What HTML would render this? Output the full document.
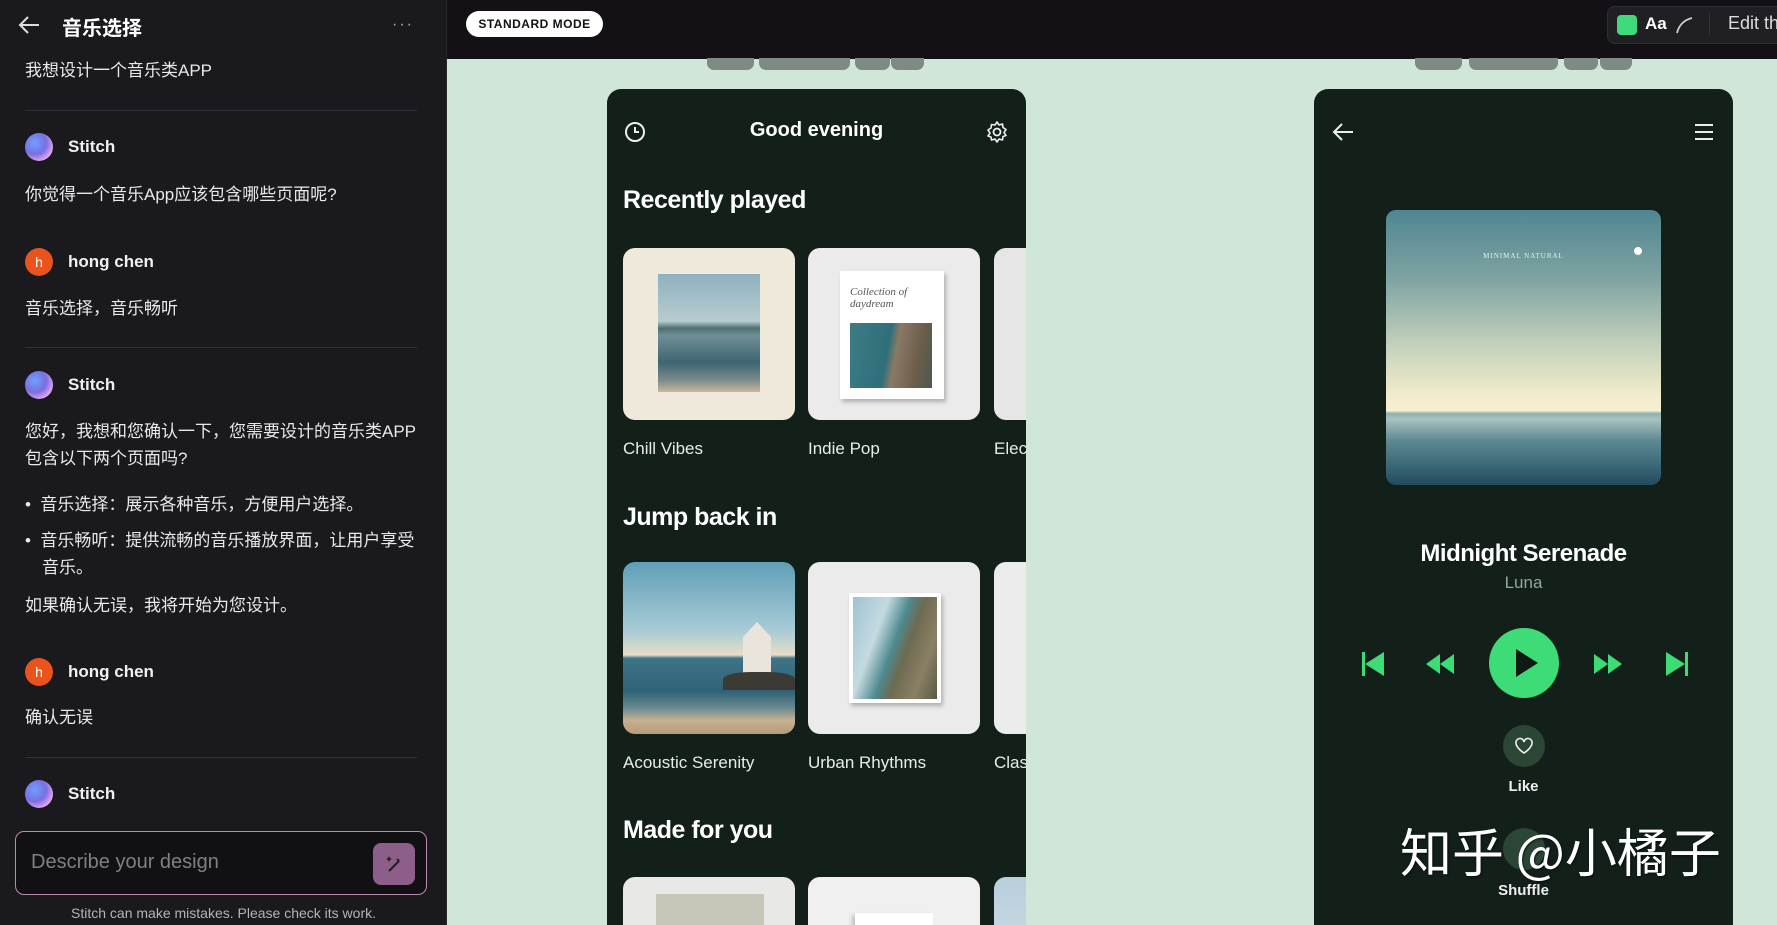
<!DOCTYPE html>
<html><head><meta charset="utf-8"><style>
*{margin:0;padding:0;box-sizing:border-box}
html,body{width:1777px;height:925px;overflow:hidden}
body{background:#cfe6d9;font-family:"Liberation Sans","Noto Sans CJK SC",sans-serif;position:relative}
.a{position:absolute}
#top{left:0;top:0;width:1777px;height:59px;background:#141116}
#side{left:0;top:0;width:447px;height:925px;background:#1a1a1e;border-right:1px solid #2a2a2e}
.t{color:#e9e9ec;font-size:17px;white-space:nowrap;font-family:"Liberation Sans","Noto Sans CJK SC",sans-serif}
.n{color:#f0f0f0;font-size:17px;font-weight:bold}
.av{width:28px;height:28px;border-radius:50%}
.st{background:radial-gradient(circle at 35% 35%,#6fa0ff,#7a6ee0 45%,#e6a6f0 75%,#f6d4f6)}
.hc{background:#e8541c;color:#fff;font-size:14px;text-align:center;line-height:28px}
.div{left:25px;width:392px;height:1px;background:#303036}
.phone{background:#13201a;border-radius:14px;overflow:hidden}
.h2{color:#fff;font-weight:bold;font-size:25px;letter-spacing:-0.5px}
.lab{color:#e8ece9;font-size:17px}
.card{width:172px;height:172px;border-radius:12px;overflow:hidden}
.tab{background:#7f8a84;border-radius:0 0 7px 7px;height:12px;top:58px}
</style></head><body>
<div id="top" class="a"></div>
<div id="side" class="a"></div>

<svg class="a" style="left:17px;top:14px" width="24" height="22" viewBox="0 0 24 22"><path d="M22 11H3M11 3L3 11l8 8" stroke="#ddd" stroke-width="2" fill="none"/></svg>
<div class="a" style="left:62px;top:12px;color:#fff;font-size:20px;font-weight:bold">音乐选择</div>
<div class="a" style="left:392px;top:16px;color:#aaa;font-size:16px;letter-spacing:2px">···</div>
<div class="a t" style="left:25px;top:56px">我想设计一个音乐类APP</div>
<div class="a div" style="top:110px"></div>
<div class="a av st" style="left:25px;top:133px"></div>
<div class="a n" style="left:68px;top:137px">Stitch</div>
<div class="a t" style="left:25px;top:180px">你觉得一个音乐App应该包含哪些页面呢?</div>
<div class="a av hc" style="left:25px;top:248px">h</div>
<div class="a n" style="left:68px;top:252px">hong chen</div>
<div class="a t" style="left:25px;top:294px">音乐选择，音乐畅听</div>
<div class="a div" style="top:347px"></div>
<div class="a av st" style="left:25px;top:371px"></div>
<div class="a n" style="left:68px;top:375px">Stitch</div>
<div class="a t" style="left:25px;top:417px">您好，我想和您确认一下，您需要设计的音乐类APP</div>
<div class="a t" style="left:25px;top:444px">包含以下两个页面吗?</div>
<div class="a t" style="left:25px;top:490px">•&nbsp; 音乐选择：展示各种音乐，方便用户选择。</div>
<div class="a t" style="left:25px;top:526px">•&nbsp; 音乐畅听：提供流畅的音乐播放界面，让用户享受</div>
<div class="a t" style="left:42px;top:553px">音乐。</div>
<div class="a t" style="left:25px;top:591px">如果确认无误，我将开始为您设计。</div>
<div class="a av hc" style="left:25px;top:658px">h</div>
<div class="a n" style="left:68px;top:662px">hong chen</div>
<div class="a t" style="left:25px;top:703px">确认无误</div>
<div class="a div" style="top:757px"></div>
<div class="a av st" style="left:25px;top:780px"></div>
<div class="a n" style="left:68px;top:784px">Stitch</div>
<div class="a" style="left:15px;top:831px;width:412px;height:64px;border:1.5px solid #b98bb3;border-radius:9px;background:#111013"></div>
<div class="a" style="left:31px;top:851px;color:#808080;font-size:20px">Describe your design</div>
<div class="a" style="left:373px;top:843px;width:42px;height:42px;border-radius:8px;background:#8d5e89"></div>
<svg class="a" style="left:382px;top:852px" width="24" height="24" viewBox="0 0 24 24"><path d="M7 19L17 9M15 7l2 2" stroke="#222" stroke-width="2.2" fill="none"/><path d="M7 4l1 2 2 1-2 1-1 2-1-2-2-1 2-1z" fill="#222"/></svg>
<div class="a" style="left:0;width:447px;top:905px;text-align:center;color:#b4b4b8;font-size:14px">Stitch can make mistakes. Please check its work.</div>

<div class="a" style="left:466px;top:11px;width:137px;height:26px;border-radius:13px;background:#fff;color:#111;font-size:12px;font-weight:bold;text-align:center;line-height:26px;letter-spacing:0.5px">STANDARD MODE</div>
<div class="a" style="left:1607px;top:6px;width:180px;height:38px;border-radius:8px;background:#1f1f24;border:1px solid #2e2e34"></div>
<div class="a" style="left:1617px;top:15px;width:20px;height:20px;border-radius:4px;background:#3fd87a"></div>
<div class="a" style="left:1645px;top:14px;color:#fff;font-weight:bold;font-size:17px">Aa</div>
<svg class="a" style="left:1674px;top:15px" width="20" height="20" viewBox="0 0 20 20"><path d="M3 18Q6 6 18 3" stroke="#ccc" stroke-width="1.8" fill="none"/></svg>
<div class="a" style="left:1709px;top:12px;width:1px;height:24px;background:#333"></div>
<div class="a" style="left:1728px;top:13px;color:#ddd;font-size:18px;white-space:nowrap">Edit th</div>

<div class="a tab" style="left:707px;width:47px"></div><div class="a tab" style="left:759px;width:91px"></div><div class="a tab" style="left:855px;width:35px"></div><div class="a tab" style="left:891px;width:33px"></div>
<div class="a tab" style="left:1415px;width:47px"></div><div class="a tab" style="left:1469px;width:89px"></div><div class="a tab" style="left:1564px;width:34px"></div><div class="a tab" style="left:1600px;width:32px"></div>

<div class="a phone" style="left:607px;top:89px;width:419px;height:836px;border-radius:14px 14px 0 0">
 <svg class="a" style="left:17px;top:32px" width="22" height="22" viewBox="0 0 22 22"><circle cx="11" cy="11" r="9" stroke="#eee" stroke-width="2" fill="none"/><path d="M11 6v5h4" stroke="#eee" stroke-width="2" fill="none"/></svg>
 <div class="a" style="left:0;width:419px;top:30px;text-align:center;color:#fff;font-weight:bold;font-size:20px">Good evening</div>
 <svg class="a" style="left:378px;top:31px" width="24" height="24" viewBox="0 0 24 24"><circle cx="12" cy="12" r="3.5" stroke="#eee" stroke-width="1.8" fill="none"/><path d="M12 2l2 3 3.5-1 .5 3.5 3 2-2 3 2 3-3 1-.5 3.5-3.5-1-2 3-2-3-3.5 1L6 17l-3-1 2-3-2-3 3-2 .5-3.5L10 5z" stroke="#eee" stroke-width="1.6" fill="none" stroke-linejoin="round"/></svg>
 <div class="a h2" style="left:16px;top:97px">Recently played</div>
 <div class="a card" style="left:16px;top:159px;background:#efe9dc"><div class="a" style="left:35px;top:26px;width:102px;height:118px;background:linear-gradient(#8fb1be 0,#b7cccf 40%,#4f6f70 46%,#6f8f96 52%,#3e6572 75%,#7a8c8c 90%,#c9b89c 100%)"></div></div>
 <div class="a card" style="left:201px;top:159px;background:#ebebeb"><div class="a" style="left:32px;top:23px;width:104px;height:128px;background:#fff;box-shadow:2px 3px 4px rgba(0,0,0,.25)"><div class="a" style="left:10px;top:15px;color:#555;font-family:'Liberation Serif',serif;font-style:italic;font-size:11px">Collection of daydream</div><div class="a" style="left:10px;top:52px;width:82px;height:65px;background:linear-gradient(100deg,#3e7c84 0,#2e6f7a 45%,#8a7a64 55%,#6c5d4b 80%,#4a5950 100%)"></div></div></div>
 <div class="a card" style="left:387px;top:159px;background:#e6e6e6"></div>
 <div class="a lab" style="left:16px;top:350px">Chill Vibes</div>
 <div class="a lab" style="left:201px;top:350px">Indie Pop</div>
 <div class="a lab" style="left:387px;top:350px">Electronic</div>
 <div class="a h2" style="left:16px;top:414px">Jump back in</div>
 <div class="a card" style="left:16px;top:473px;background:linear-gradient(#5f9fb7 0,#a8cbd6 40%,#e8ddc8 54%,#3f7488 56%,#2f6276 75%,#6a8a90 85%,#c8b090 92%,#b79c7a 100%)"><div class="a" style="left:120px;top:60px;width:28px;height:60px;background:#e9e5dc;clip-path:polygon(50% 0,100% 25%,100% 100%,0 100%,0 25%)"></div><div class="a" style="left:100px;top:110px;width:72px;height:18px;background:#3b3a34;border-radius:40% 40% 0 0"></div></div>
 <div class="a card" style="left:201px;top:473px;background:#ebebeb"><div class="a" style="left:41px;top:31px;width:92px;height:110px;background:#fff;box-shadow:2px 3px 4px rgba(0,0,0,.25)"><div class="a" style="left:4px;top:4px;width:84px;height:102px;background:linear-gradient(110deg,#9fc3d3 0,#c4dae0 30%,#4e8a8f 48%,#6d6a52 60%,#8a8064 80%,#5a5a48 100%)"></div></div></div>
 <div class="a card" style="left:387px;top:473px;background:#ececec"></div>
 <div class="a lab" style="left:16px;top:664px">Acoustic Serenity</div>
 <div class="a lab" style="left:201px;top:664px">Urban Rhythms</div>
 <div class="a lab" style="left:387px;top:664px">Classical</div>
 <div class="a h2" style="left:16px;top:727px">Made for you</div>
 <div class="a card" style="left:16px;top:788px;background:#e8e8e6"><div class="a" style="left:33px;top:17px;width:108px;height:80px;background:#c8c6b8"></div></div>
 <div class="a card" style="left:201px;top:788px;background:#f0f0f0"><div class="a" style="left:47px;top:36px;width:78px;height:60px;background:#fff;box-shadow:-3px 2px 4px rgba(0,0,0,.2)"></div></div>
 <div class="a card" style="left:387px;top:788px;background:linear-gradient(#b9cfdc,#dde6ea)"></div>
</div>

<div class="a phone" style="left:1314px;top:89px;width:419px;height:836px;border-radius:14px 14px 0 0">
 <svg class="a" style="left:17px;top:32px" width="24" height="22" viewBox="0 0 24 22"><path d="M22 11H3M11 3L3 11l8 8" stroke="#eee" stroke-width="2" fill="none"/></svg>
 <svg class="a" style="left:379px;top:33px" width="22" height="20" viewBox="0 0 22 20"><path d="M2 3h18M2 10h18M2 17h18" stroke="#eee" stroke-width="2"/></svg>
 <div class="a" style="left:72px;top:121px;width:275px;height:275px;border-radius:10px;background:linear-gradient(#4f8691 0,#7fa3a2 25%,#c5d3bd 50%,#f3eccd 68%,#f6efd2 73%,#8fb0b0 74%,#a9c2c0 76%,#5c8890 84%,#3d6c7a 92%,#224a5e 100%)">
  <div class="a" style="left:0;width:275px;top:42px;text-align:center;color:#e8eee8;font-size:7px;letter-spacing:1px;font-family:'Liberation Serif',serif">MINIMAL NATURAL</div>
  <div class="a" style="left:248px;top:37px;width:8px;height:8px;border-radius:50%;background:#fff"></div>
 </div>
 <div class="a" style="left:0;width:419px;top:451px;text-align:center;color:#fff;font-weight:bold;font-size:24px;letter-spacing:-0.5px">Midnight Serenade</div>
 <div class="a" style="left:0;width:419px;top:484px;text-align:center;color:#8fa99a;font-size:17px">Luna</div>
 <svg class="a" style="left:48px;top:560px" width="330" height="30" viewBox="0 0 330 30">
  <path d="M0 3h3v24H0zM3 15L22 3v24z" fill="#3ddc76"/>
  <path d="M64 15l14-10v20zM78 15l14-10v20z" fill="#3ddc76"/>
  <path d="M232 5l14 10-14 10zM246 5l14 10-14 10z" fill="#3ddc76"/>
  <path d="M304 3l19 12-19 12zM323 3h3v24h-3z" fill="#3ddc76"/>
 </svg>
 <div class="a" style="left:175px;top:539px;width:70px;height:70px;border-radius:50%;background:#3ddc76"></div>
 <svg class="a" style="left:198px;top:558px" width="28" height="32" viewBox="0 0 28 32"><path d="M4 2l22 14L4 30z" fill="#0e1a13"/></svg>
 <div class="a" style="left:189px;top:636px;width:42px;height:42px;border-radius:50%;background:#2c4636"></div>
 <svg class="a" style="left:200px;top:648px" width="20" height="18" viewBox="0 0 20 18"><path d="M10 16S2 11 2 6a4 4 0 018-1 4 4 0 018 1c0 5-8 10-8 10z" stroke="#eee" stroke-width="1.6" fill="none"/></svg>
 <div class="a" style="left:0;width:419px;top:689px;text-align:center;color:#eee;font-size:15px;font-weight:bold">Like</div>
 <div class="a" style="left:189px;top:739px;width:42px;height:42px;border-radius:50%;background:#2c4636"></div>
 <div class="a" style="left:0;width:419px;top:793px;text-align:center;color:#eee;font-size:15px;font-weight:bold">Shuffle</div>
</div>
<div class="a" style="left:1400px;top:822px;color:#fff;font-size:52px;font-family:'Noto Sans CJK SC','WenQuanYi Zen Hei',sans-serif;text-shadow:1px 1px 2px rgba(0,0,0,.6);white-space:nowrap;line-height:56px">知乎 @小橘子</div>
</body></html>
